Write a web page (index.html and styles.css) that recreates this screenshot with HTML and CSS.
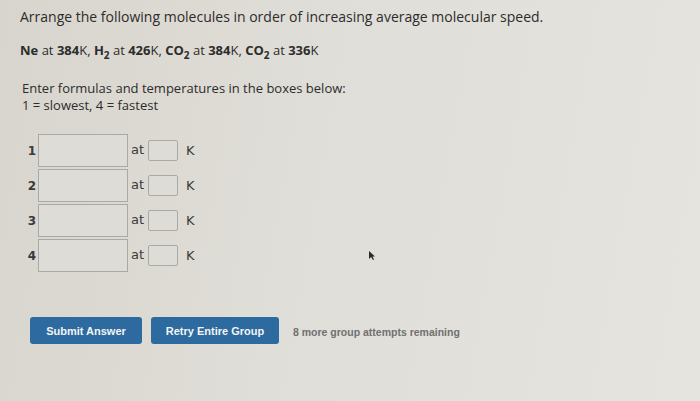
FILE: index.html
```html
<!DOCTYPE html>
<html lang="en">
<head>
    <meta charset="UTF-8">
    <title>Molecular Speed</title>
    <link rel="stylesheet" href="styles.css">
</head>
<body>
    <main class="question">
        <p class="prompt">Arrange the following molecules in order of increasing average molecular speed.</p>
        <p class="list"><b>Ne</b> at <b>384</b>K, <b>H<sub>2</sub></b> at <b>426</b>K, <b>CO<sub>2</sub></b> at <b>384</b>K, <b>CO<sub>2</sub></b> at <b>336</b>K</p>

        <p class="hint">Enter formulas and temperatures in the boxes below:<br>1 = slowest, 4 = fastest</p>

        <div class="rows">
            <div class="row">
                <span class="num">1</span>
                <input class="formula" type="text">
                <span class="at">at</span>
                <input class="temp" type="text">
                <span class="unit">K</span>
            </div>
            <div class="row">
                <span class="num">2</span>
                <input class="formula" type="text">
                <span class="at">at</span>
                <input class="temp" type="text">
                <span class="unit">K</span>
            </div>
            <div class="row">
                <span class="num">3</span>
                <input class="formula" type="text">
                <span class="at">at</span>
                <input class="temp" type="text">
                <span class="unit">K</span>
            </div>
            <div class="row">
                <span class="num">4</span>
                <input class="formula" type="text">
                <span class="at">at</span>
                <input class="temp" type="text">
                <span class="unit">K</span>
            </div>
        </div>

        <div class="actions">
            <button class="btn">Submit Answer</button>
            <button class="btn">Retry Entire Group</button>
            <span class="attempts">8 more group attempts remaining</span>
        </div>
    </main>

    <svg class="cursor" width="8" height="11" viewBox="0 0 8 11">
        <path d="M1 1 L1 9 L3 7 L5 10 L6 9.5 L4.5 6.5 L7 6.5 Z" fill="#2a2a2a"/>
    </svg>
</body>
</html>
```

FILE: styles.css
```css
html, body{
    margin: 0;
    height: 100%;
}
body{
    background: linear-gradient(100deg, #d8d5ce 0%, #e0ded8 45%, #e5e4df 100%);
    font-family: "Open Sans", sans-serif;
    color: #2c2c2c;
    position: relative;
    overflow: hidden;
}
.question{
    padding: 6px 0 0 20px;
}
p{
    margin: 0;
}
.prompt{
    font-size: 14px;
    line-height: 22px;
}
.list{
    font-size: 13px;
    line-height: 22px;
    margin-top: 11px;
}
.list b{
    font-weight: 700;
}
.list sub{
    font-size: 10px;
    line-height: 0;
}
.hint{
    font-size: 13px;
    line-height: 17px;
    margin-top: 19px;
    padding-left: 2px;
}
.rows{
    margin-top: 20px;
    display: flex;
    flex-direction: column;
    gap: 2px;
}
.row{
    display: flex;
    align-items: center;
    height: 33px;
}
.num{
    width: 16px;
    font-family: "DejaVu Sans", sans-serif;
    font-weight: bold;
    font-size: 12px;
    color: #3a3a3a;
    text-align: right;
    box-sizing: border-box;
}
input{
    box-sizing: border-box;
    border: 1.5px solid #aaa9a3;
    background: #dedcd6;
    margin: 0;
    padding: 0;
}
.formula{
    width: 90px;
    height: 33px;
    margin-left: 2px;
}
.at,.unit{
    font-family: "DejaVu Sans", sans-serif;
    font-size: 13px;
    color: #3a3a3a;
}
.at{
    margin-left: 3px;
    margin-top: -2px;
}
.temp{
    width: 30px;
    height: 21px;
    margin-left: 4px;
    border-radius: 2px;
}
.unit{
    margin-left: 8px;
}
.actions{
    margin-top: 45px;
    padding-left: 10px;
    display: flex;
    align-items: center;
}
.btn{
    background: #2c6a9f;
    color: #f4f4f4;
    border: 0;
    border-radius: 3px;
    height: 27px;
    font-family: "Liberation Sans", Arial, sans-serif;
    font-weight: bold;
    font-size: 11px;
    padding: 0;
    margin-right: 9px;
    white-space: nowrap;
}
.btn:first-child{
    width: 112px;
}
.btn:nth-child(2){
    width: 128px;
}
.attempts{
    margin-left: 5px;
    font-family: "Liberation Sans", Arial, sans-serif;
    font-weight: bold;
    font-size: 10.5px;
    color: #707070;
    padding-top: 2px;
}
.cursor{
    position: absolute;
    left: 368px;
    top: 250px;
}
```
